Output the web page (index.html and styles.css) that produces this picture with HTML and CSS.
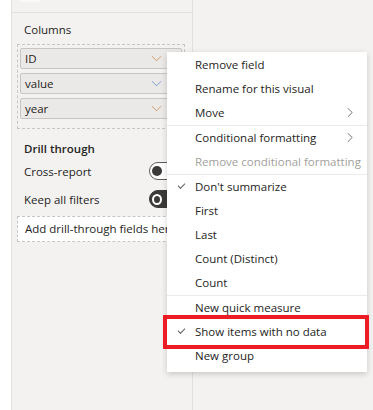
FILE: index.html
```html
<!DOCTYPE html>
<html lang="en">
<head>
  <meta charset="UTF-8" />
  <title>Fields pane menu</title>
  <link rel="stylesheet" href="styles.css">
</head>
<body>
  <div class="app">
    <div class="rail"></div>
    <aside class="pane">
      <div class="pane-top"><span class="tab-stub"></span></div>
      <div class="well-title">Columns</div>
      <div class="well">
        <div class="field">ID
          <svg class="chev" viewBox="0 0 12 7"><path d="M1 1l5 5 5-5" stroke="#d0935f" fill="none"/></svg>
        </div>
        <div class="field">value
          <svg class="chev" viewBox="0 0 12 7"><path d="M1 1l5 5 5-5" stroke="#6f95cc" fill="none"/></svg>
        </div>
        <div class="field">year
          <svg class="chev" viewBox="0 0 12 7"><path d="M1 1l5 5 5-5" stroke="#d0935f" fill="none"/></svg>
        </div>
      </div>
      <div class="drill-title">Drill through</div>
      <div class="opt-row">Cross-report <span class="toggle off"><span class="knob"></span></span></div>
      <div class="opt-row">Keep all filters <span class="toggle on"><span class="knob"></span></span></div>
      <div class="drop">Add drill-through fields here</div>
    </aside>
    <main class="canvas"></main>

    <ul class="menu">
      <li class="item">Remove field</li>
      <li class="item">Rename for this visual</li>
      <li class="item">Move
        <svg class="arrow" viewBox="0 0 7 12"><path d="M1 1l5 5-5 5" stroke="#605e5c" fill="none"/></svg>
      </li>
      <li class="sep"></li>
      <li class="item">Conditional formatting
        <svg class="arrow" viewBox="0 0 7 12"><path d="M1 1l5 5-5 5" stroke="#605e5c" fill="none"/></svg>
      </li>
      <li class="item disabled">Remove conditional formatting</li>
      <li class="sep"></li>
      <li class="item checked">Don't summarize</li>
      <li class="item">First</li>
      <li class="item">Last</li>
      <li class="item">Count (Distinct)</li>
      <li class="item">Count</li>
      <li class="sep"></li>
      <li class="item">New quick measure</li>
      <li class="item checked marked">Show items with no data</li>
      <li class="item">New group</li>
    </ul>
  </div>
</body>
</html>
```

FILE: styles.css
```css
body {
  margin: 0;
  font-family: 'Open Sans', 'Noto Sans', sans-serif;
  font-size: 11.5px;
  color: #252423;
  overflow: hidden;
}
.app {
  position: relative;
  display: flex;
  height: 410px;
  background: #f3f2f1;
}
.rail {
  width: 11px;
  background: #fff;
  border-right: 1px solid #e1dfdd;
}
.pane {
  width: 168px;
  padding: 0 7px 0 5px;
  border-right: 1px solid #e1dfdd;
  overflow: hidden;
}
.pane-top {
  height: 12px;
  margin: 0 -7px 0 -5px;
  border-bottom: 1px solid #e1dfdd;
}
.tab-stub {
  display: block;
  width: 20px;
  height: 2px;
  margin-left: 8px;
  background: #faf9f8;
}
.well-title {
  padding: 9px 0 0 7px;
  line-height: 16px;
}
.well {
  margin-top: 6px;
  padding: 3px 2px 9px;
  border: 1px dashed #c8c6c4;
  display: flex;
  flex-direction: column;
  gap: 4px;
}
.field {
  height: 19px;
  display: flex;
  align-items: center;
  justify-content: space-between;
  padding: 0 19px 0 4px;
  background: #ebe9e7;
  border: 1px solid #c8c6c4;
  border-radius: 2px;
}
.chev {
  width: 11px;
  height: 7px;
}
.drill-title {
  margin-top: 12px;
  padding-left: 7px;
  line-height: 16px;
  font-weight: 600;
}
.opt-row {
  height: 28px;
  display: flex;
  align-items: center;
  justify-content: space-between;
  padding-left: 7px;
}
.toggle {
  width: 30px;
  height: 16px;
  border-radius: 9px;
  border: 1px solid #605e5c;
  display: flex;
  align-items: center;
  padding: 0 2px;
}
.toggle.off {
  background: #fff;
}
.toggle.on {
  background: #3b3a39;
  border-color: #3b3a39;
}
.knob {
  width: 10px;
  height: 10px;
  border-radius: 50%;
  background: #3b3a39;
}
.toggle.on .knob {
  width: 6px;
  height: 7px;
  background: transparent;
  border: 2px solid #fff;
}
.drop {
  margin-top: 3px;
  width: 220px;
  height: 24px;
  line-height: 24px;
  padding-left: 7px;
  background: #fff;
  border: 1px dashed #c8c6c4;
  white-space: nowrap;
}
.canvas {
  flex: 1;
}
.menu {
  position: absolute;
  left: 167px;
  top: 52px;
  width: 200px;
  margin: 0;
  padding: 1px 0 4px;
  list-style: none;
  background: #fff;
  box-shadow: 0 2px 6px rgba(0, 0, 0, 0.18);
}
.item {
  position: relative;
  height: 24px;
  line-height: 24px;
  padding-left: 28px;
  white-space: nowrap;
}
.item.disabled {
  color: #a19f9d;
}
.item.checked::before {
  content: '';
  position: absolute;
  left: 11px;
  top: 8px;
  width: 6px;
  height: 3px;
  border-left: 1px solid #605e5c;
  border-bottom: 1px solid #605e5c;
  transform: rotate(-45deg);
}
.arrow {
  position: absolute;
  right: 14px;
  top: 6px;
  width: 6px;
  height: 11px;
}
.sep {
  height: 1px;
  background: #edebe9;
}
.item.marked::after {
  content: '';
  position: absolute;
  top: -5px;
  bottom: -5px;
  left: -4px;
  right: -2px;
  border: 4.5px solid #ed1c24;
}
```
